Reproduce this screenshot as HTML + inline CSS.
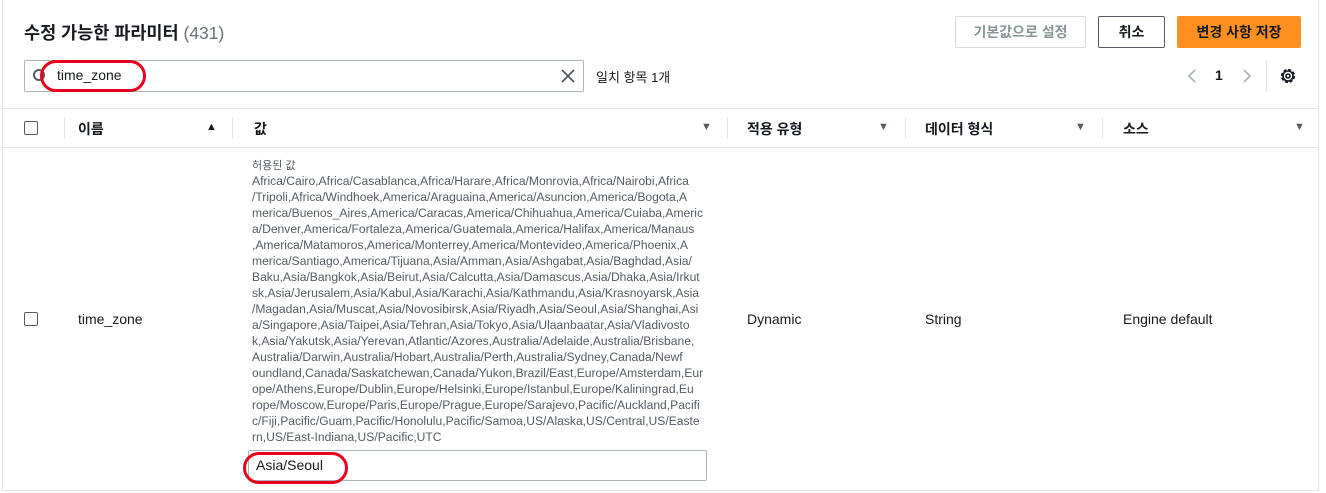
<!DOCTYPE html>
<html><head><meta charset="utf-8"><style>
*{box-sizing:border-box;margin:0;padding:0}
body{width:1326px;height:493px;background:#fff;font-family:"Liberation Sans","Noto Sans CJK KR",sans-serif;color:#16191f;position:relative;overflow:hidden}
.a{position:absolute}
.frame{left:2px;top:0;width:1317px;height:491px;border:1px solid #e2e4e6;border-top:none}
.btn{position:absolute;height:32px;font-size:14px;font-weight:bold;display:flex;align-items:center;justify-content:center;border-radius:2px}
.cb{position:absolute;width:14px;height:14px;border:1.5px solid #545b64;border-radius:2px;background:#fff}
.hd{font-size:14px;font-weight:bold;color:#16191f}
.sep{position:absolute;width:1px;height:22px;background:#e2e4e6}
.tri{position:absolute;font-size:11px;color:#545b64}
.vals{left:252px;top:173px;font-size:12.1px;line-height:16px;color:#545b64;white-space:nowrap;letter-spacing:0}
</style></head><body>
<div class="a frame"></div>
<div class="a" style="left:24px;top:20px;font-size:17.5px;font-weight:bold">수정 가능한 파라미터 <span style="font-weight:normal;color:#687078">(431)</span></div>
<div class="btn" style="left:955px;top:16px;width:131px;border:1px solid #d5dbdb;color:#879596">기본값으로 설정</div>
<div class="btn" style="left:1098px;top:16px;width:67px;border:1px solid #545b64;color:#16191f">취소</div>
<div class="btn" style="left:1177px;top:16px;width:124px;background:#ff9020;color:#16191f">변경 사항 저장</div>
<div class="a" style="left:24px;top:60px;width:560px;height:32px;border:1px solid #aab7b8;border-radius:2px"></div>
<svg class="a" style="left:32px;top:68px" width="16" height="16"><circle cx="7" cy="7" r="5" fill="none" stroke="#545b64" stroke-width="2"/></svg>
<div class="a" style="left:57px;top:67px;font-size:14px">time_zone</div>
<svg class="a" style="left:560px;top:68px" width="16" height="16"><path d="M2 2L14 14M14 2L2 14" stroke="#545b64" stroke-width="1.8"/></svg>
<div class="a" style="left:40px;top:60px;width:106px;height:32px;border:3px solid #e8001c;border-radius:16px"></div>
<div class="a" style="left:596px;top:67px;font-size:13px;color:#16191f">일치 항목 1개</div>
<svg class="a" style="left:1185px;top:68px" width="14" height="16"><path d="M10 2L4 8L10 14" fill="none" stroke="#aab7b8" stroke-width="1.8"/></svg>
<div class="a" style="left:1215px;top:67px;font-size:14px;font-weight:bold">1</div>
<svg class="a" style="left:1240px;top:68px" width="14" height="16"><path d="M4 2L10 8L4 14" fill="none" stroke="#aab7b8" stroke-width="1.8"/></svg>
<div class="a" style="left:1266px;top:60px;width:1px;height:32px;background:#e2e4e6"></div>
<svg class="a" style="left:1279px;top:67px" width="18" height="18" viewBox="0 0 18 18"><circle cx="9" cy="9" r="6" fill="none" stroke="#16191f" stroke-width="2.2" stroke-dasharray="3 1.7"/><circle cx="9" cy="9" r="5" fill="none" stroke="#16191f" stroke-width="1.6"/><circle cx="9" cy="9" r="2" fill="none" stroke="#16191f" stroke-width="1.6"/></svg>
<div class="a" style="left:3px;top:108px;width:1315px;height:1px;background:#e2e4e6"></div>
<div class="a" style="left:3px;top:147px;width:1315px;height:1px;background:#e2e4e6"></div>
<div class="cb" style="left:24px;top:121px"></div>
<div class="sep" style="left:64px;top:117px"></div>
<div class="a hd" style="left:78px;top:119px">이름</div>
<div class="tri" style="left:206px;top:121px;color:#16191f">▲</div>
<div class="sep" style="left:232px;top:117px"></div>
<div class="a hd" style="left:254px;top:119px">값</div>
<div class="tri" style="left:701px;top:121px">▼</div>
<div class="sep" style="left:727px;top:117px"></div>
<div class="a hd" style="left:747px;top:119px">적용 유형</div>
<div class="tri" style="left:878px;top:121px">▼</div>
<div class="sep" style="left:905px;top:117px"></div>
<div class="a hd" style="left:925px;top:119px">데이터 형식</div>
<div class="tri" style="left:1075px;top:121px">▼</div>
<div class="sep" style="left:1102px;top:117px"></div>
<div class="a hd" style="left:1123px;top:119px">소스</div>
<div class="tri" style="left:1294px;top:121px">▼</div>
<div class="cb" style="left:24px;top:312px"></div>
<div class="a" style="left:78px;top:311px;font-size:14px">time_zone</div>
<div class="a" style="left:747px;top:311px;font-size:14px">Dynamic</div>
<div class="a" style="left:925px;top:311px;font-size:14px">String</div>
<div class="a" style="left:1123px;top:311px;font-size:14px">Engine default</div>
<div class="a" style="left:252px;top:157px;font-size:11px;color:#545b64">허용된 값</div>
<div class="a vals">Africa/Cairo,Africa/Casablanca,Africa/Harare,Africa/Monrovia,Africa/Nairobi,Africa<br>/Tripoli,Africa/Windhoek,America/Araguaina,America/Asuncion,America/Bogota,A<br>merica/Buenos_Aires,America/Caracas,America/Chihuahua,America/Cuiaba,Americ<br>a/Denver,America/Fortaleza,America/Guatemala,America/Halifax,America/Manaus<br>,America/Matamoros,America/Monterrey,America/Montevideo,America/Phoenix,A<br>merica/Santiago,America/Tijuana,Asia/Amman,Asia/Ashgabat,Asia/Baghdad,Asia/<br>Baku,Asia/Bangkok,Asia/Beirut,Asia/Calcutta,Asia/Damascus,Asia/Dhaka,Asia/Irkut<br>sk,Asia/Jerusalem,Asia/Kabul,Asia/Karachi,Asia/Kathmandu,Asia/Krasnoyarsk,Asia<br>/Magadan,Asia/Muscat,Asia/Novosibirsk,Asia/Riyadh,Asia/Seoul,Asia/Shanghai,Asi<br>a/Singapore,Asia/Taipei,Asia/Tehran,Asia/Tokyo,Asia/Ulaanbaatar,Asia/Vladivosto<br>k,Asia/Yakutsk,Asia/Yerevan,Atlantic/Azores,Australia/Adelaide,Australia/Brisbane,<br>Australia/Darwin,Australia/Hobart,Australia/Perth,Australia/Sydney,Canada/Newf<br>oundland,Canada/Saskatchewan,Canada/Yukon,Brazil/East,Europe/Amsterdam,Eur<br>ope/Athens,Europe/Dublin,Europe/Helsinki,Europe/Istanbul,Europe/Kaliningrad,Eu<br>rope/Moscow,Europe/Paris,Europe/Prague,Europe/Sarajevo,Pacific/Auckland,Pacifi<br>c/Fiji,Pacific/Guam,Pacific/Honolulu,Pacific/Samoa,US/Alaska,US/Central,US/Easte<br>rn,US/East-Indiana,US/Pacific,UTC</div>
<div class="a" style="left:248px;top:450px;width:459px;height:31px;border:1px solid #aab7b8;border-radius:2px"></div>
<div class="a" style="left:256px;top:457px;font-size:14px">Asia/Seoul</div>
<div class="a" style="left:243px;top:452px;width:105px;height:32px;border:3px solid #e8001c;border-radius:16px"></div>
</body></html>
